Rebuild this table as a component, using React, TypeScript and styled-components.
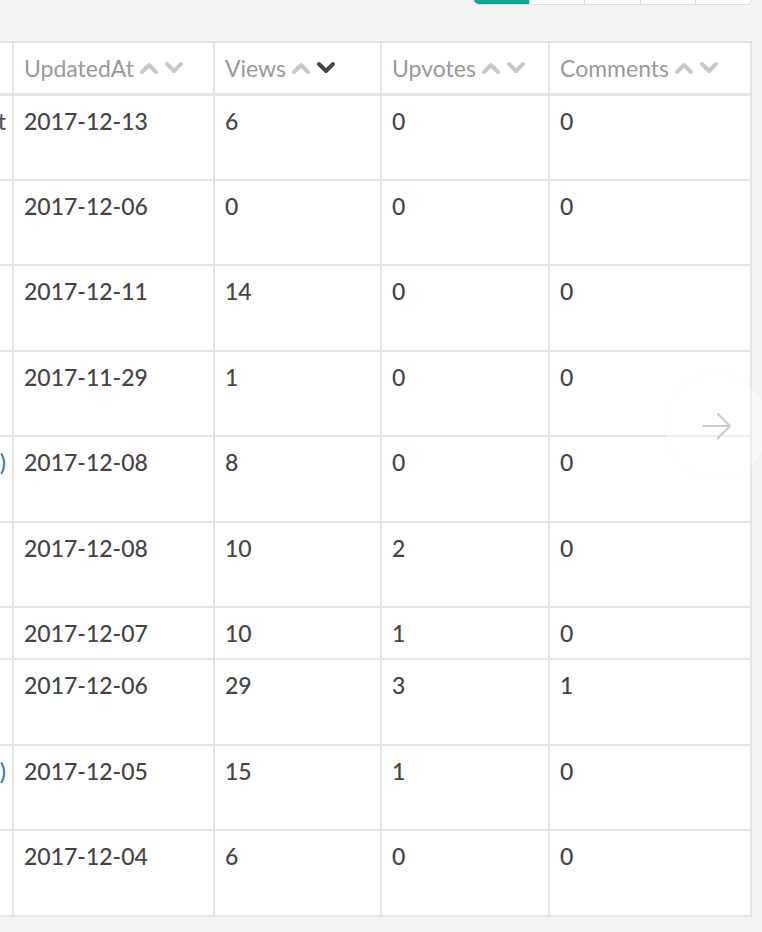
import React from "react";
import styled, { createGlobalStyle } from "styled-components";

const Global = createGlobalStyle`
  html, body { margin: 0; padding: 0; background: #f3f3f3; }
  body { font-family: Lato, "Open Sans", sans-serif; overflow: hidden; }
`;

const Page = styled.div`
  width: 762px;
  height: 932px;
  position: relative;
  overflow: hidden;
  display: flex;
  flex-direction: column;
`;

const PagerClip = styled.div`
  height: 5px;
  display: flex;
  justify-content: flex-end;
  align-items: flex-end;
  overflow: hidden;
  padding-right: 10px;
`;

const Pager = styled.div`
  display: flex;
  flex-shrink: 0;
  border: 1px solid #dcdcdc;
  border-radius: 6px;
  background: #fff;
  overflow: hidden;
  box-shadow: 0 1px 1px rgba(0, 0, 0, 0.04);
`;

const PageBtn = styled.div<{ $active?: boolean }>`
  width: 54.6px;
  height: 36px;
  background: ${(p) => (p.$active ? "#17a08d" : "#fff")};
  & + & { border-left: 1px solid #dcdcdc; }
`;

const TableWrap = styled.div`
  margin-top: 36px;
  padding-right: 11px;
`;

const Table = styled.table`
  border-collapse: collapse;
  table-layout: fixed;
  width: 751px;
  background: #fff;
  font-size: 23px;
  color: #444;
`;

const Th = styled.th<{ $w: number }>`
  width: ${(p) => p.$w}px;
  height: 52px;
  box-sizing: border-box;
  border: 2px solid #e4e4e4;
  border-bottom-width: 3px;
  padding: 0 10px;
  text-align: left;
  font-weight: 400;
  color: #999;
  white-space: nowrap;
  vertical-align: middle;
`;

const StubTh = styled(Th)`
  border-left: none;
  padding: 0;
`;

const HeadInner = styled.span`
  display: inline-flex;
  align-items: center;
  gap: 5px;
`;

const Chevron = styled.svg<{ $on?: boolean }>`
  display: block;
  width: 20px;
  height: 14px;
  color: ${(p) => (p.$on ? "#454545" : "#c6c9c4")};
`;

function Up() {
  return (
    <Chevron viewBox="0 0 20 14" fill="none">
      <path d="M3 11 L10 4 L17 11" stroke="currentColor" strokeWidth="4" strokeLinecap="round" strokeLinejoin="round" />
    </Chevron>
  );
}

function Down({ on }: { on?: boolean }) {
  return (
    <Chevron viewBox="0 0 20 14" fill="none" $on={on}>
      <path d="M3 3 L10 10 L17 3" stroke="currentColor" strokeWidth="4" strokeLinecap="round" strokeLinejoin="round" />
    </Chevron>
  );
}

const Td = styled.td<{ $tall?: boolean }>`
  height: ${(p) => (p.$tall ? "85.55px" : "52px")};
  box-sizing: border-box;
  border: 2px solid #e4e4e4;
  padding: 10px 10px 0;
  vertical-align: top;
  line-height: 30px;
  white-space: nowrap;
  font-weight: 500;
`;

const StubTd = styled(Td)`
  border-left: none;
  padding: 10px 6px 0 0;
  overflow: hidden;
  direction: rtl;
  text-align: left;
`;

const StubText = styled.span<{ $link?: boolean }>`
  color: ${(p) => (p.$link ? "#3d78b8" : "#555")};
  direction: ltr;
  unicode-bidi: isolate;
`;

const ScrollHint = styled.div`
  position: absolute;
  left: 665px;
  top: 374px;
  width: 104px;
  height: 104px;
  border-radius: 50%;
  background: rgba(255, 255, 255, 0.35);
  box-shadow: 0 0 3px rgba(0, 0, 0, 0.04);
  display: flex;
  align-items: center;
  justify-content: center;
`;

type Row = {
  stub: string;
  link?: boolean;
  date: string;
  views: number;
  up: number;
  com: number;
  tall: boolean;
};

const rows: Row[] = [
  { stub: "Deployment Checklist", date: "2017-12-13", views: 6, up: 0, com: 0, tall: true },
  { stub: "", date: "2017-12-06", views: 0, up: 0, com: 0, tall: true },
  { stub: "", date: "2017-12-11", views: 14, up: 0, com: 0, tall: true },
  { stub: "", date: "2017-11-29", views: 1, up: 0, com: 0, tall: true },
  { stub: "(demo)", link: true, date: "2017-12-08", views: 8, up: 0, com: 0, tall: true },
  { stub: "", date: "2017-12-08", views: 10, up: 2, com: 0, tall: true },
  { stub: "", date: "2017-12-07", views: 10, up: 1, com: 0, tall: false },
  { stub: "", date: "2017-12-06", views: 29, up: 3, com: 1, tall: true },
  { stub: "(video)", link: true, date: "2017-12-05", views: 15, up: 1, com: 0, tall: true },
  { stub: "", date: "2017-12-04", views: 6, up: 0, com: 0, tall: true },
];

const cols: { label: string; w: number; active?: boolean }[] = [
  { label: "UpdatedAt", w: 201 },
  { label: "Views", w: 167, active: true },
  { label: "Upvotes", w: 168 },
  { label: "Comments", w: 202 },
];

export default function App() {
  return (
    <Page>
      <Global />
      <PagerClip>
        <Pager>
          <PageBtn $active />
          <PageBtn />
          <PageBtn />
          <PageBtn />
          <PageBtn />
        </Pager>
      </PagerClip>
      <TableWrap>
        <Table>
          <thead>
            <tr>
              <StubTh $w={13} />
              {cols.map((c) => (
                <Th key={c.label} $w={c.w}>
                  <HeadInner>
                    {c.label}
                    <Up />
                    <Down on={c.active} />
                  </HeadInner>
                </Th>
              ))}
            </tr>
          </thead>
          <tbody>
            {rows.map((r, i) => (
              <tr key={i}>
                <StubTd $tall={r.tall}>
                  <StubText $link={r.link}>{r.stub}</StubText>
                </StubTd>
                <Td $tall={r.tall}>{r.date}</Td>
                <Td $tall={r.tall}>{r.views}</Td>
                <Td $tall={r.tall}>{r.up}</Td>
                <Td $tall={r.tall}>{r.com}</Td>
              </tr>
            ))}
          </tbody>
        </Table>
      </TableWrap>
      <ScrollHint>
        <svg width="30" height="26" viewBox="0 0 30 26" fill="none">
          <path d="M1 13 H28 M16 1 L28 13 L16 25" stroke="#c9c9c9" strokeWidth="2" strokeLinecap="round" strokeLinejoin="round" />
        </svg>
      </ScrollHint>
    </Page>
  );
}
